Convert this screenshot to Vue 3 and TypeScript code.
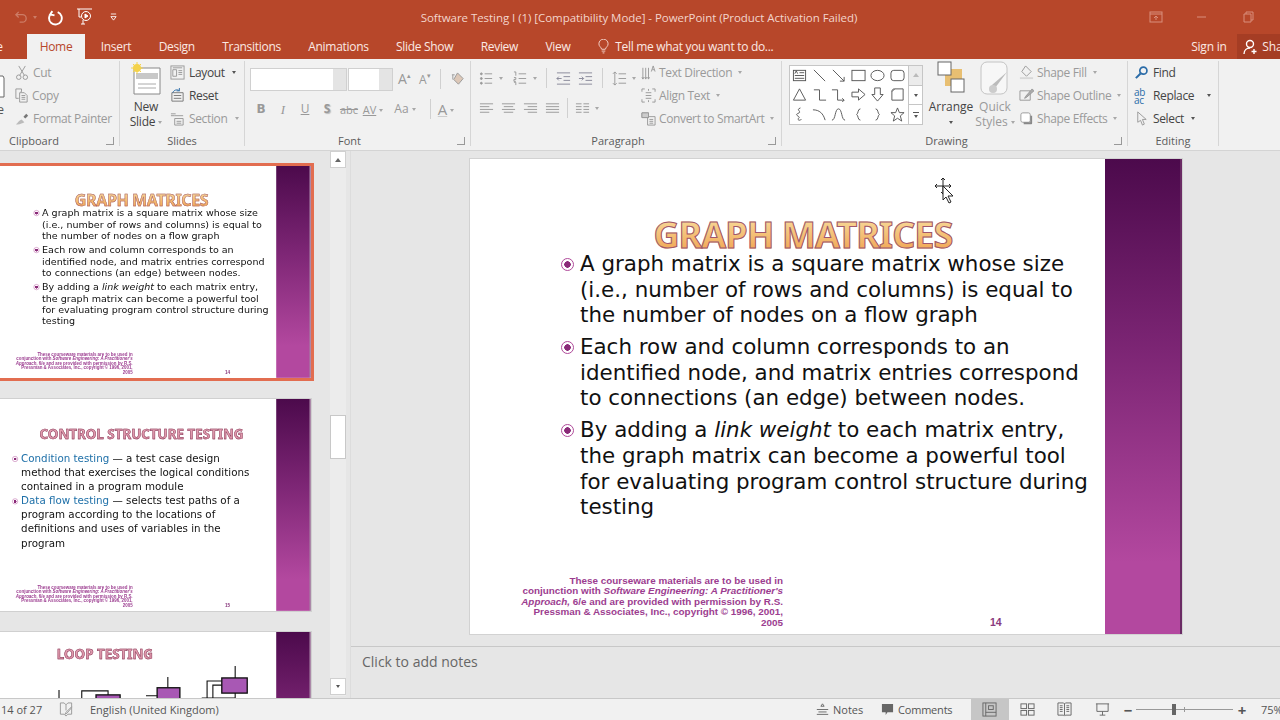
<script setup lang="ts">
type Seg = { t: string; k?: "i" | "b" };
type Bullet = Seg[][];

const s = (t: string, k?: "i" | "b"): Seg => ({ t, k });

const graphBullets: Bullet[] = [
  [
    [s("A graph matrix is a square matrix whose size")],
    [s("(i.e., number of rows and columns) is equal to")],
    [s("the number of nodes on a flow graph")],
  ],
  [
    [s("Each row and column corresponds to an")],
    [s("identified node, and matrix entries correspond")],
    [s("to connections (an edge) between nodes.")],
  ],
  [
    [s("By adding a "), s("link weight", "i"), s(" to each matrix entry,")],
    [s("the graph matrix can become a powerful tool")],
    [s("for evaluating program control structure during")],
    [s("testing")],
  ],
];

const controlBullets: Bullet[] = [
  [
    [s("Condition testing", "b"), s(" — a test case design")],
    [s("method that exercises the logical conditions")],
    [s("contained in a program module")],
  ],
  [
    [s("Data flow testing", "b"), s(" — selects test paths of a")],
    [s("program according to the locations of")],
    [s("definitions and uses of variables in the")],
    [s("program")],
  ],
];

const thumbs = [
  { id: "graph", title: "GRAPH MATRICES", bullets: graphBullets, num: "14", active: true },
  { id: "control", title: "CONTROL STRUCTURE TESTING", bullets: controlBullets, num: "15", active: false },
];

const tabs = ["Insert", "Design", "Transitions", "Animations", "Slide Show", "Review", "View"];

// 16x16 outline icons, stroke colour comes from the svg's class
const icons: Record<string, string> = {
  cut: '<circle cx="4" cy="13" r="2.4"/><circle cx="11" cy="13" r="2.4"/><path d="M5 11 11 1M10 11 4 1"/>',
  copy: '<path d="M2 1h6v3h-1M2 1v10h3M6 5h5l3 3v7H6zM8 8h4M8 10h4M8 12h4"/>',
  painter: '<path d="M1 14c2-1 3-4 6-5l3 3c-2 1-6 3-9 2z" fill="#bbb" stroke="none"/><path d="M9 6l3-3 2 2-3 3z" fill="#777" stroke="none"/>',
  layout: '<rect x="1" y="1" width="14" height="14"/><path d="M3 3h10M3 5h4v7H3zM9 6h4M9 8h4M9 10h4"/>',
  reset: '<path d="M2 5h12v9H2zM4 8h8M4 11h8" stroke="#777"/><path d="M3 5c1-3 5-4 7-2M10 0v3H7" stroke="#2b6ca8"/>',
  section: '<path d="M1 3h5M1 5h4M5 8h9v7H5zM5 5h9M7 11h5M7 13h5"/>',
  clear: '<path d="M8 1 14 7 9 13 4 8z" fill="#ddc8b8"/><path d="M2 3h3M3 3v5"/>',
  bullets: '<path d="M6 3h8M6 8h8M6 13h8" /><circle cx="2.5" cy="3" r="1" fill="#999"/><circle cx="2.5" cy="8" r="1" fill="#999"/><circle cx="2.5" cy="13" r="1" fill="#999"/>',
  numbers: '<path d="M6 3h8M6 8h8M6 13h8M1 1h2v4M1 7h2v2H1v2h2M1 12h2v3"/>',
  outdent: '<path d="M1 2h14M8 6h7M8 10h7M1 14h14M6 8H1M3 6 1 8l2 2" stroke="#889"/>',
  indent: '<path d="M1 2h14M8 6h7M8 10h7M1 14h14M1 8h5M4 6l2 2-2 2" stroke="#889"/>',
  spacing: '<path d="M7 3h8M7 8h8M7 13h8M3 1v14M1 3l2-2 2 2M1 13l2 2 2-2"/>',
  left: '<path d="M1 3h14M1 6h10M1 9h14M1 12h10"/>',
  center: '<path d="M1 3h14M3 6h10M1 9h14M3 12h10"/>',
  right: '<path d="M1 3h14M5 6h10M1 9h14M5 12h10"/>',
  justify: '<path d="M1 3h14M1 6h14M1 9h14M1 12h14"/>',
  columns: '<path d="M1 3h6M9 3h6M1 6h6M9 6h6M1 9h6M9 9h6M1 12h6M9 12h6"/>',
  textdir: '<path d="M2 3v12M5 3v12M8 3v12M1 13l1 2 1-2M4 13l1 2 1-2M7 13l1 2 1-2M11 7l2-6 2 6M12 5h2"/>',
  aligntext: '<path d="M1 1h3M1 1v3M15 1h-3M15 1v3M1 15h3M1 15v-3M15 15h-3M15 15v-3M5 5h6M5 8h6M5 11h6M8 1v2M8 13v2"/>',
  smartart: '<path d="M1 2h7v5H1zM7 6h8v9H7zM9 9h4M9 11h4M9 13h4" /><path d="M1 2h7v5H1z" fill="#ccc"/>',
  fill: '<path d="M7 1 13 7 8 12 3 7z"/><path d="M1 14h14" stroke="#d8d8d8" stroke-width="2"/>',
  outline: '<path d="M1 3h11v10H1z"/><path d="M14 1 7 9l-1 2 2-1 8-7z" fill="#aaa"/>',
  effects: '<rect x="2" y="2" width="10" height="10" rx="2" fill="#fff"/><path d="M12 5h2v8a1 1 0 0 1-1 1H5v-2h7z" fill="#888" stroke="none"/>',
  find: '<circle cx="10" cy="6" r="3.8" stroke="#2b6ca8" stroke-width="1.8"/><path d="M7 9 2 14" stroke="#2b6ca8" stroke-width="2.2"/>',
  select: '<path d="M4 1v11l3-2 2 5 2-1-2-5h4z"/>',
  notes: '<path d="M1 8h14M3 11h10M1 14h14M6 4l2-3 2 3z" stroke="#555"/>',
  sorter: '<rect x="1" y="2" width="6" height="5"/><rect x="9" y="2" width="6" height="5"/><rect x="1" y="9" width="6" height="5"/><rect x="9" y="9" width="6" height="5"/>',
  reading: '<path d="M1 1h6l1 1 1-1h6v13H9l-1 1-1-1H1zM8 2v12M3 4h3M3 6h3M3 8h3M3 10h3M10 4h3M10 6h3M10 8h3M10 10h3"/>',
  show: '<path d="M1 2h14M2 2v8h12V2M8 10v4M5 14h6"/>',
  normal: '<rect x="1" y="1" width="14" height="14"/><path d="M4 1v14M4 11h11"/><rect x="7" y="4" width="5" height="4"/>',
  specs: '<path d="M2 1h4l2 2 2-2h4v12h-4l-2 2-2-2H2zM8 3v6M14 6l-5 6-2 1 1-2 6-6" />',
};

const shapes = [
  '<rect x="1.5" y="2.5" width="13" height="11"/><path d="M3 6l1.500-3 1.500 3M8 5h5M3 8h10M3 11h10"/>',
  '<path d="M2 2l12 12"/>',
  '<path d="M2 2l12 12M14 9.500V14H9.500"/>',
  '<rect x="1" y="2.500" width="14" height="11"/>',
  '<ellipse cx="8" cy="8" rx="7" ry="5.500"/>',
  '<rect x="1" y="2.500" width="14" height="11" rx="3"/>',
  '<path d="M8 2 14.500 14h-13z"/>',
  '<path d="M2 3h6v11h7"/>',
  '<path d="M1 3h6v11h7M12 12l2 2-2 2"/>',
  '<path d="M1 5.500h7V2l7 6-7 6V10.500H1z"/>',
  '<path d="M5 1h6v7h3l-6 7-6-7h3z"/>',
  '<path d="M5 2h9v12H2V5zM5 2C3 2 2 3 2 5"/>',
  '<path d="M9 1C3 3 12 5 6 7c-4 2 4 3 1 5-2 2 2 3 3 1"/>',
  '<path d="M1 3c7 0 11 4 13 11"/>',
  '<path d="M1 14C5 14 4 2 8 2s3 12 7 12"/>',
  '<path d="M10 2C7 2 8 7 6 8c2 1 1 6 4 6"/>',
  '<path d="M6 2c3 0 2 5 4 6-2 1-1 6-4 6"/>',
  '<path d="M8 1l2 5h5l-4 3.500 1.500 5.500L8 12l-4.500 3L5 9.500 1 6h5z"/>',
];
</script>

<template>
  <div class="app">
    <header class="titlebar">
      <div class="qat">
        <svg class="undo" viewBox="0 0 16 16"><path d="M5 2 2 5l3 3M2 5h7a4 4 0 0 1 0 8H6" /></svg>
        <i class="caret faded"></i>
        <svg class="redo" viewBox="0 0 16 16"><path d="M6 2 4 5l4 1M5 4a6 6 0 1 0 6-1" /></svg>
        <svg class="start" viewBox="0 0 18 18">
          <path d="M1 1h15M3 1v8h2M9 16H5M7 12v4" /><circle cx="10" cy="8" r="4.500" /><path d="M9 6v4l3-2z" fill="#fff" />
        </svg>
        <svg class="more" viewBox="0 0 8 10"><path d="M1 1h6M1 4h6L4 8z" /></svg>
      </div>
      <div class="doc-title">Software Testing I (1) [Compatibility Mode] - PowerPoint (Product Activation Failed)</div>
      <div class="winctl">
        <svg viewBox="0 0 14 12"><rect x="1" y="1" width="12" height="10" /><path d="M1 3h12M7 9V5M5 7l2-2 2 2" /></svg>
        <svg viewBox="0 0 14 12"><path d="M2 6h9" /></svg>
        <svg viewBox="0 0 14 12"><path d="M3 3h7v8H3zM5 3V1h7v8h-2" /></svg>
      </div>
    </header>

    <nav class="tabbar">
      <span class="tab-file">File</span>
      <span class="tab tab-home">Home</span>
      <span v-for="t in tabs" :key="t" class="tab">{{ t }}</span>
      <span class="tell">
        <svg viewBox="0 0 12 16"><path d="M4 11C3 8 1 8 1 5a5 5 0 0 1 10 0c0 3-2 3-3 6zM4 13h4M5 15h2" /></svg>
        Tell me what you want to do...
      </span>
      <span class="signin">Sign in</span>
      <span class="share">
        <svg viewBox="0 0 16 16"><circle cx="7" cy="5" r="3.500" /><path d="M1 15c0-4 3-6 6-6M11 10v5M8.500 12.500h5" /></svg>
        Share
      </span>
    </nav>

    <section class="ribbon">
      <div class="group g-clip">
        <div class="body">
          <div class="paste-sliver">
            <svg viewBox="0 0 5 24"><path d="M-4 1h7l1 2v19h-8" fill="#fff" stroke="#666" /></svg>
            <span class="paste-label"><span>Paste</span></span>
          </div>
          <div class="rows">
            <div class="rb"><svg class="ic" viewBox="0 0 16 16" v-html="icons.cut"></svg>Cut</div>
            <div class="rb"><svg class="ic" viewBox="0 0 16 16" v-html="icons.copy"></svg>Copy</div>
            <div class="rb"><svg class="ic" viewBox="0 0 16 16" v-html="icons.painter"></svg>Format Painter</div>
          </div>
        </div>
        <div class="label">Clipboard<i class="launch"></i></div>
      </div>

      <div class="group g-slides">
        <div class="body">
          <div class="big new-slide">
            <svg class="bigic" viewBox="0 0 30 32">
              <path d="M3 6h26v26H3z" fill="#fff" stroke="#888" />
              <path d="M5 11h22v6H5z" fill="#c8c8c8" />
              <path d="M7 22h18M7 26h18" stroke="#aaa" />
              <circle cx="6" cy="6" r="4" fill="#f4d24a" />
              <path d="M6 0v12M0 6h12M2 2l8 8M10 2l-8 8" stroke="#f4d24a" />
            </svg>
            <span>New</span>
            <span>Slide<i class="caret"></i></span>
          </div>
          <div class="rows">
            <div class="rb on"><svg class="ic" viewBox="0 0 16 16" v-html="icons.layout"></svg>Layout<i class="caret"></i></div>
            <div class="rb on"><svg class="ic" viewBox="0 0 16 16" v-html="icons.reset"></svg>Reset</div>
            <div class="rb"><svg class="ic" viewBox="0 0 16 16" v-html="icons.section"></svg>Section<i class="caret"></i></div>
          </div>
        </div>
        <div class="label">Slides</div>
      </div>

      <div class="group g-font">
        <div class="body col">
          <div class="font-row top">
            <span class="combo c-name"><b></b></span>
            <span class="combo c-size"><b></b></span>
            <span class="glyph grow-a">A<sup>▴</sup></span>
            <span class="glyph shrink-a">A<sup>▾</sup></span>
            <i class="sep"></i>
            <svg class="ic" viewBox="0 0 16 16" v-html="icons.clear"></svg>
          </div>
          <div class="font-row bottom">
            <span class="glyph fmt strong">B</span>
            <span class="glyph fmt ital">I</span>
            <span class="glyph fmt under">U</span>
            <span class="glyph fmt shadow">S</span>
            <span class="glyph fmt strike">abc</span>
            <span class="glyph fmt av">AV<i class="caret"></i></span>
            <span class="glyph fmt aa">Aa<i class="caret"></i></span>
            <i class="sep"></i>
            <span class="glyph fmt color">A<i class="caret"></i></span>
          </div>
        </div>
        <div class="label pad">Font<i class="launch"></i></div>
      </div>

      <div class="group g-para">
        <div class="body">
          <div class="col para-left">
            <div class="para-row top">
              <svg class="ic" viewBox="0 0 16 16" v-html="icons.bullets"></svg><i class="caret"></i>
              <svg class="ic num-ic" viewBox="0 0 16 16" v-html="icons.numbers"></svg><i class="caret"></i>
              <i class="sep"></i>
              <svg class="ic" viewBox="0 0 16 16" v-html="icons.outdent"></svg>
              <svg class="ic" viewBox="0 0 16 16" v-html="icons.indent"></svg>
              <i class="sep"></i>
              <svg class="ic" viewBox="0 0 16 16" v-html="icons.spacing"></svg><i class="caret"></i>
            </div>
            <div class="para-row bottom">
              <svg class="ic" viewBox="0 0 16 16" v-html="icons.left"></svg>
              <svg class="ic" viewBox="0 0 16 16" v-html="icons.center"></svg>
              <svg class="ic" viewBox="0 0 16 16" v-html="icons.right"></svg>
              <svg class="ic" viewBox="0 0 16 16" v-html="icons.justify"></svg>
              <i class="sep"></i>
              <svg class="ic" viewBox="0 0 16 16" v-html="icons.columns"></svg><i class="caret"></i>
            </div>
          </div>
          <div class="rows">
            <div class="rb"><svg class="ic" viewBox="0 0 16 16" v-html="icons.textdir"></svg>Text Direction<i class="caret"></i></div>
            <div class="rb"><svg class="ic" viewBox="0 0 16 16" v-html="icons.aligntext"></svg>Align Text<i class="caret"></i></div>
            <div class="rb"><svg class="ic" viewBox="0 0 16 16" v-html="icons.smartart"></svg>Convert to SmartArt<i class="caret"></i></div>
          </div>
        </div>
        <div class="label pad">Paragraph<i class="launch"></i></div>
      </div>

      <div class="group g-draw">
        <div class="body">
          <div class="gallery">
            <div class="shapes">
              <svg v-for="(p, i) in shapes" :key="i" class="shape" viewBox="0 0 16 16" v-html="p"></svg>
            </div>
            <div class="gal-scroll">
              <span class="dim"><i class="up"></i></span>
              <span><i class="caret dark"></i></span>
              <span><i class="bar"></i><i class="caret dark"></i></span>
            </div>
          </div>
          <div class="big arrange">
            <svg class="bigic" viewBox="0 0 28 34">
              <rect x="8" y="8" width="17" height="17" fill="#e8bf72" />
              <rect x="1" y="1" width="13" height="13" fill="#fff" stroke="#666" />
              <rect x="14" y="18" width="13" height="13" fill="#fff" stroke="#666" />
            </svg>
            <span class="on-text">Arrange</span>
            <span class="on-text"><i class="caret"></i></span>
          </div>
          <div class="big quick">
            <svg class="bigic" viewBox="0 0 30 34">
              <rect x="1" y="1" width="26" height="32" rx="6" fill="#f7f7f7" stroke="#c4c4c4" />
              <path d="M27 11 15 27l-4 1 1-4z" fill="#bbb" />
              <circle cx="13" cy="28" r="4" fill="#ccc" />
            </svg>
            <span>Quick</span>
            <span>Styles<i class="caret"></i></span>
          </div>
          <div class="rows">
            <div class="rb"><svg class="ic" viewBox="0 0 16 16" v-html="icons.fill"></svg>Shape Fill<i class="caret"></i></div>
            <div class="rb"><svg class="ic" viewBox="0 0 16 16" v-html="icons.outline"></svg>Shape Outline<i class="caret"></i></div>
            <div class="rb"><svg class="ic" viewBox="0 0 16 16" v-html="icons.effects"></svg>Shape Effects<i class="caret"></i></div>
          </div>
        </div>
        <div class="label pad">Drawing<i class="launch"></i></div>
      </div>

      <div class="group g-edit">
        <div class="body">
          <div class="rows">
            <div class="rb on"><svg class="ic" viewBox="0 0 16 16" v-html="icons.find"></svg>Find</div>
            <div class="rb on"><span class="repl">ab<br />ac</span>Replace<i class="caret gap"></i></div>
            <div class="rb on"><svg class="ic" viewBox="0 0 16 16" v-html="icons.select"></svg>Select<i class="caret"></i></div>
          </div>
        </div>
        <div class="label">Editing</div>
      </div>
    </section>

    <main class="workspace">
      <aside class="rail">
        <div class="thumbs">
          <div v-for="t in thumbs" :key="t.id" class="thumb" :class="{ active: t.active }">
            <div class="slide scaled" :class="'s-' + t.id">
              <div class="slide-main">
                <h2 class="slide-title">{{ t.title }}</h2>
                <div class="slide-body">
                  <div v-for="(b, i) in t.bullets" :key="i" class="bullet">
                    <span class="dot"></span>
                    <div>
                      <div v-for="(line, j) in b" :key="j" class="line">
                        <span v-for="(seg, n) in line" :key="n" :class="seg.k">{{ seg.t }}</span>
                      </div>
                    </div>
                  </div>
                </div>
                <div class="slide-foot">
                  <p class="credit">
                    These courseware materials are to be used in<br />conjunction with
                    <em>Software Engineering: A Practitioner's</em><br /><em>Approach,</em> 6/e and are provided with
                    permission by R.S.<br />Pressman &amp; Associates, Inc., copyright © 1996, 2001,<br />2005
                  </p>
                  <span class="num">{{ t.num }}</span>
                </div>
              </div>
              <div class="band"></div>
            </div>
          </div>
          <div class="thumb">
            <div class="slide scaled s-loop">
              <div class="slide-main">
                <h2 class="slide-title">LOOP TESTING</h2>
                <svg class="loops" viewBox="0 0 635 300">
                  <g fill="#a858b4" stroke="#111" stroke-width="3">
                    <rect x="231" y="72" width="54" height="60" />
                    <rect x="368" y="56" width="51" height="60" />
                    <rect x="513" y="34" width="57" height="34" />
                  </g>
                  <g fill="none" stroke="#111" stroke-width="2.500">
                    <path d="M148 61v40M199 100V63h59v9M392 32v24M543 7v27M343 74h25M480 100V41h33M493 100V50h20M468 79h75V68" />
                  </g>
                </svg>
              </div>
              <div class="band"></div>
            </div>
          </div>
        </div>
        <div class="rail-scroll">
          <span class="sb-btn"><i class="up"></i></span>
          <span class="sb-track"><i class="sb-thumb"></i></span>
          <span class="sb-btn"><i class="caret dark"></i></span>
        </div>
      </aside>

      <div class="editor">
        <div class="stage">
          <div class="slide s-graph">
            <div class="slide-main">
              <h2 class="slide-title">GRAPH MATRICES</h2>
              <div class="slide-body">
                <div v-for="(b, i) in graphBullets" :key="i" class="bullet">
                  <span class="dot"></span>
                  <div>
                    <div v-for="(line, j) in b" :key="j" class="line">
                      <span v-for="(seg, n) in line" :key="n" :class="seg.k">{{ seg.t }}</span>
                    </div>
                  </div>
                </div>
              </div>
              <div class="slide-foot">
                <p class="credit">
                  These courseware materials are to be used in<br />conjunction with
                  <em>Software Engineering: A Practitioner's</em><br /><em>Approach,</em> 6/e and are provided with
                  permission by R.S.<br />Pressman &amp; Associates, Inc., copyright © 1996, 2001,<br />2005
                </p>
                <span class="num">14</span>
              </div>
            </div>
            <div class="band"></div>
            <svg class="cursor" viewBox="0 0 20 28">
              <path d="M9 1v16M1 9h16M7 3l2-2 2 2M7 15l2 2 2-2M3 7 1 9l2 2M15 7l2 2-2 2" fill="none" stroke="#222" />
              <path d="M9 9v14l3-3 3 6 2-1-3-6h5z" fill="#fff" stroke="#222" />
            </svg>
          </div>
        </div>
        <div class="notes">Click to add notes</div>
      </div>
    </main>

    <footer class="status">
      <span class="count">14 of 27</span>
      <svg class="ic st-spec" viewBox="0 0 16 16" v-html="icons.specs"></svg>
      <span class="lang">English (United Kingdom)</span>
      <span class="st-btn st-notes"><svg class="ic" viewBox="0 0 16 16" v-html="icons.notes"></svg>Notes</span>
      <span class="st-btn st-comments">
        <svg class="ic" viewBox="0 0 14 14"><path d="M1 1h12v9H7l-2 3v-3H1z" fill="#666" stroke="none" /></svg>
        Comments
      </span>
      <span class="view active"><svg class="ic" viewBox="0 0 16 16" v-html="icons.normal"></svg></span>
      <span class="view"><svg class="ic" viewBox="0 0 16 16" v-html="icons.sorter"></svg></span>
      <span class="view"><svg class="ic" viewBox="0 0 16 16" v-html="icons.reading"></svg></span>
      <span class="view"><svg class="ic" viewBox="0 0 16 16" v-html="icons.show"></svg></span>
      <span class="zoom-sign">−</span>
      <span class="slider"><i class="tick"></i><i class="knob"></i></span>
      <span class="zoom-sign">+</span>
      <span class="pct">75%</span>
    </footer>
  </div>
</template>

<style scoped>
.app {
  width: 1280px;
  height: 720px;
  overflow: hidden;
  display: flex;
  flex-direction: column;
  background: #e6e6e6;
  font-family: "Open Sans", "Noto Sans", sans-serif;
  font-size: 12px;
  color: #444;
}

svg {
  flex: none;
  display: block;
  fill: none;
}

/* title bar */
.titlebar {
  height: 34px;
  flex: none;
  display: flex;
  align-items: center;
  background: #b7472a;
  color: #f3d5cc;
  position: relative;
}

.qat {
  width: 400px;
  box-sizing: border-box;
  flex: none;
  display: flex;
  align-items: center;
  padding-left: 14px;
}

.qat svg {
  stroke: #fff;
  stroke-width: 1.4;
}

.qat .undo {
  width: 15px;
  height: 15px;
  stroke: #cd7c66;
}

.caret.faded {
  margin-left: 4px;
  border-top-color: #cd7c66;
}

.qat .redo {
  width: 17px;
  height: 17px;
  margin-left: 9px;
  stroke-width: 1.800;
}

.qat .start {
  width: 18px;
  height: 18px;
  margin-left: 13px;
  stroke-width: 1;
}

.qat .more {
  width: 7px;
  height: 9px;
  margin-left: 16px;
  stroke-width: 1;
}

.doc-title {
  width: 478px;
  flex: none;
  text-align: center;
  font-size: 11.500px;
  letter-spacing: -0.05px;
  white-space: nowrap;
}

.winctl {
  display: flex;
  gap: 32px;
  margin-left: 271px;
}

.winctl svg {
  width: 14px;
  height: 12px;
  stroke: #d98f7c;
}

/* tabs */
.tabbar {
  height: 25px;
  flex: none;
  display: flex;
  align-items: stretch;
  background: #b7472a;
  color: #fbe9e4;
  white-space: nowrap;
}

.tabbar > span {
  display: flex;
  align-items: center;
}

.tab-file {
  width: 27px;
  box-sizing: border-box;
  justify-content: flex-end;
  padding-right: 24px;
  overflow: hidden;
}

.tab {
  padding: 0 13.700px;
  letter-spacing: -0.3px;
}

.tab-home {
  width: 58px;
  padding: 0;
  justify-content: center;
  background: #f1f1f1;
  color: #b7472a;
  margin-right: 2px;
}

.tell {
  gap: 6px;
  margin-left: 14px;
  width: 593px;
  letter-spacing: -0.3px;
}

.tell svg {
  width: 11px;
  height: 15px;
  stroke: #f6d9d1;
}

.signin {
  width: 46px;
  letter-spacing: -0.2px;
}

.share {
  flex: 1;
  gap: 3px;
  padding-left: 6px;
  background: #a53d24;
  overflow: hidden;
}

.share svg {
  width: 16px;
  height: 16px;
  stroke: #fff;
  stroke-width: 1.400;
}

/* ribbon */
.ribbon {
  height: 92px;
  box-sizing: border-box;
  flex: none;
  display: flex;
  background: #f1f1f1;
  border-bottom: 1px solid #d4d4d4;
  color: #9a9a9a;
  white-space: nowrap;
}

.group {
  flex: none;
  box-sizing: border-box;
  display: flex;
  flex-direction: column;
  border-right: 1px solid #d6d6d6;
  margin: 2px 0 4px;
}

.g-clip { width: 120px; }
.g-slides { width: 125px; }
.g-font { width: 226px; }
.g-para { width: 311px; }
.g-draw { width: 346px; }
.g-edit { width: 91px; }

.body {
  height: 69px;
  flex: none;
  display: flex;
}

.body.col,
.col {
  flex-direction: column;
  display: flex;
}

.label {
  flex: none;
  position: relative;
  margin-top: 3px;
  text-align: center;
  font-size: 11px;
  line-height: 15px;
  color: #5c5c5c;
}

.label.pad {
  padding-right: 16px;
}

.g-clip .label {
  text-align: left;
  padding-left: 9px;
}

.launch {
  position: absolute;
  right: 5px;
  top: 4px;
  width: 7px;
  height: 7px;
  border-right: 1px solid #999;
  border-bottom: 1px solid #999;
}

.rows {
  display: flex;
  flex-direction: column;
}

.rb {
  height: 23px;
  display: flex;
  align-items: center;
  gap: 3px;
  letter-spacing: -0.35px;
}

.rb.on,
.on-text {
  color: #444;
}

.ic {
  width: 15px;
  height: 15px;
  stroke: #999;
  stroke-width: 1;
}

.caret {
  display: inline-block;
  width: 0;
  height: 0;
  margin-left: 3px;
  vertical-align: middle;
  border: 2.500px solid transparent;
  border-top: 3px solid #a8a8a8;
  border-bottom: 0;
}

.rb.on .caret,
.on-text .caret,
.caret.dark {
  border-top-color: #555;
}

.caret.gap {
  margin-left: 9px;
}

.up {
  display: inline-block;
  border: 3px solid transparent;
  border-bottom: 4px solid #666;
  border-top: 0;
}

.sep {
  width: 1px;
  height: 20px;
  background: #d0d0d0;
  flex: none;
}

.big {
  display: flex;
  flex-direction: column;
  align-items: center;
  line-height: 15px;
}

.bigic {
  width: 30px;
  height: 34px;
  margin-bottom: 4px;
}

.paste-sliver {
  width: 15px;
  flex: none;
  font-size: 12px;
  color: #555;
}

.paste-sliver svg {
  width: 5px;
  height: 24px;
  margin-top: 14px;
}

.paste-label {
  display: flex;
  justify-content: flex-end;
  width: 4px;
  overflow: hidden;
  margin-top: 2px;
}

.g-clip .rb:nth-child(2) {
  margin-left: -1px;
}

.new-slide {
  width: 48px;
  color: #444;
  padding-left: 2px;
  letter-spacing: -0.2px;
}

.g-slides .rb {
  gap: 4px;
}

/* font group */
.g-font .body {
  padding: 7px 0 0 5px;
  gap: 8px;
  box-sizing: border-box;
}

.font-row {
  display: flex;
  align-items: center;
  height: 22px;
}

.combo {
  display: flex;
  justify-content: flex-end;
  height: 21px;
  background: #fff;
  border: 1px solid #d0d0d0;
}

.combo b {
  width: 13px;
  background: #e4e4e4;
}

.c-name { width: 95px; }
.c-size { width: 43px; margin-left: 1px; }

.glyph {
  display: inline-block;
  color: #999;
  line-height: 1;
}

.glyph sup {
  font-size: 7px;
  vertical-align: 6px;
}

.grow-a {
  font-size: 14px;
  margin-left: 5px;
  width: 21px;
}

.shrink-a {
  font-size: 12px;
  margin-right: 4px;
  width: 17px;
}

.font-row .sep {
  margin-right: 9px;
}

.fmt {
  font-size: 12px;
  text-align: center;
  width: 22px;
  white-space: nowrap;
}

.font-row.bottom .strong { font-weight: 700; font-family: "DejaVu Sans", sans-serif; }
.ital { font-style: italic; font-family: "Liberation Serif", serif; font-size: 13px; }
.under { text-decoration: underline; }
.shadow { font-weight: 700; text-shadow: 1px 1px 1px #bbb; }
.strike { text-decoration: line-through; font-size: 11px; }
.av { width: 26px; text-decoration: underline; font-size: 11px; }
.aa { width: 32px; margin-left: 3px; }
.font-row.bottom .sep { margin: 0 3px 0 9px; }
.color { font-size: 15px; width: 24px; text-decoration: underline; text-decoration-color: #ccc; }

/* paragraph group */
.para-left {
  width: 170px;
  box-sizing: border-box;
  flex: none;
  padding: 7px 0 0 8px;
  gap: 10px;
}

.para-row {
  display: flex;
  align-items: center;
  height: 20px;
  gap: 7px;
}

.para-row .caret {
  margin-left: -2px;
}

.num-ic {
  margin-left: 3px;
}

.para-row.top .sep {
  margin: 0 2px;
}

/* drawing group */
.gallery {
  width: 134px;
  height: 60px;
  box-sizing: border-box;
  flex: none;
  display: flex;
  margin: 4px 6px 0 7px;
  background: #fff;
  border: 1px solid #c6c6c6;
}

.shapes {
  flex: 1;
  display: grid;
  grid-template-columns: repeat(6, 19.500px);
  grid-auto-rows: 19.300px;
  align-items: center;
  justify-items: center;
}

.shape {
  width: 15px;
  height: 15px;
  stroke: #555;
  stroke-width: 1;
}

.gal-scroll {
  width: 13px;
  display: flex;
  flex-direction: column;
  border-left: 1px solid #c6c6c6;
}

.gal-scroll span {
  flex: 1;
  display: flex;
  flex-direction: column;
  gap: 2px;
  align-items: center;
  justify-content: center;
}

.gal-scroll span + span {
  border-top: 1px solid #c6c6c6;
}

.gal-scroll .dim {
  background: #ececec;
}

.gal-scroll .dim .up {
  border-bottom-color: #bbb;
}

.gal-scroll .caret {
  margin: 0;
}

.gal-scroll .bar {
  width: 6px;
  height: 1px;
  background: #555;
}

.arrange {
  width: 44px;
  flex: none;
}

.arrange .caret {
  margin: 0;
}

.quick {
  width: 44px;
  flex: none;
  margin-right: 2px;
}

.g-edit .rows {
  padding-left: 6px;
}

.g-edit .rb {
  gap: 4px;
}

.repl {
  display: block;
  width: 15px;
  font-size: 10px;
  line-height: 8px;
  color: #2b6ca8;
}

/* workspace */
.workspace {
  flex: 1;
  min-height: 0;
  display: flex;
}

.rail {
  width: 350px;
  flex: none;
  display: flex;
  border-right: 1px solid #dcdcdc;
  overflow: hidden;
}

.thumbs {
  width: 330px;
  flex: none;
  overflow: hidden;
  padding-top: 15px;
  display: flex;
  flex-direction: column;
  gap: 21px;
}

.thumb {
  width: 318px;
  height: 212px;
  flex: none;
  margin-left: -7px;
  outline: 1px solid #d0d0d0;
  background: #fff;
}

.thumb.active {
  outline: 3px solid #e26d50;
}

.rail-scroll {
  width: 16px;
  flex: none;
  display: flex;
  flex-direction: column;
  background: #ececec;
  height: 546px;
  margin-top: -1px;
}

.sb-btn {
  height: 15px;
  flex: none;
  margin: 1px 0;
  background: #fff;
  border: 1px solid #d0d0d0;
  display: flex;
  align-items: center;
  justify-content: center;
}

.sb-btn .caret {
  margin: 0;
}

.sb-track {
  flex: 1;
  padding-top: 246px;
}

.sb-thumb {
  display: block;
  height: 42px;
  background: #fff;
  border: 1px solid #c8c8c8;
}

/* slides, drawn at full size and scaled down in the rail */
.slide {
  width: 712px;
  height: 475px;
  flex: none;
  display: flex;
  background: #fff;
  position: relative;
  color: #111;
  font-family: "DejaVu Sans", sans-serif;
}

.scaled {
  transform: scale(0.446);
  transform-origin: 0 0;
  filter: blur(0.6px);
}

.slide-main {
  flex: 1;
  min-width: 0;
  display: flex;
  flex-direction: column;
  padding: 57px 0 6px 0;
  overflow: hidden;
}

.slide-title {
  margin: 0;
  padding-left: 31px;
  height: 38px;
  flex: none;
  line-height: 38px;
  text-align: center;
  font-family: "Noto Sans", sans-serif;
  font-size: 36px;
  font-weight: 700;
  letter-spacing: -0.9px;
  white-space: nowrap;
  color: transparent;
  background: linear-gradient(#f8dd9e, #f0a24e);
  -webkit-background-clip: text;
  background-clip: text;
  -webkit-text-stroke: 1px #a0566e;
}

.slide-body {
  margin-top: -3px;
  padding: 0 0 0 91px;
  flex: 1;
}

.bullet {
  position: relative;
  padding-left: 19px;
  margin-bottom: 6px;
}

.dot {
  position: absolute;
  left: 0;
  top: 7px;
  width: 13px;
  height: 13px;
  box-sizing: border-box;
  border-radius: 50%;
  border: 1.500px solid #b04a9a;
  background: radial-gradient(circle, #8a2a78 0 3px, #fff 3.500px);
}

.line {
  height: 25.700px;
  line-height: 25.700px;
  font-size: 21.400px;
  white-space: nowrap;
}

.line .i {
  font-style: italic;
}

.line .b {
  color: #1d6fa8;
}

.slide-foot {
  display: flex;
  align-items: flex-end;
}

.credit {
  width: 313px;
  flex: none;
  margin: 0;
  text-align: right;
  white-space: nowrap;
  font-family: "Liberation Sans", sans-serif;
  font-size: 9.900px;
  font-weight: 700;
  line-height: 10.500px;
  color: #9c3d90;
}

.num {
  margin-left: 207px;
  font-family: "Liberation Sans", sans-serif;
  font-size: 10.500px;
  font-weight: 700;
  line-height: 12px;
  color: #8a3a7e;
}

.band {
  width: 77px;
  flex: none;
  background: linear-gradient(#4c0a4c, #7c2574 40%, #b3489f 85%, #b3489f);
  border-right: 2px solid #6a2b64;
  box-sizing: border-box;
}

.s-control .slide-title,
.s-loop .slide-title {
  padding: 0;
  font-size: 30px;
  letter-spacing: 0;
  background: linear-gradient(#e8a8b8, #d98aa0);
  -webkit-background-clip: text;
  background-clip: text;
  -webkit-text-stroke: 1px #7c3050;
}

.s-control .slide-title {
  width: 666px;
}

.s-control .slide-main {
  padding-top: 60px;
}

.s-control .slide-body {
  margin-top: 0;
  padding: 20px 0 0 43px;
}

.s-control .line {
  height: 31.600px;
  line-height: 31.600px;
  font-size: 23.100px;
}

.s-control .bullet {
  margin-bottom: 0;
  padding-left: 20px;
}

.s-control .dot {
  top: 10px;
}

.s-loop .slide-title {
  width: 502px;
}

.s-loop .slide-main {
  padding-top: 31px;
}

.loops {
  width: 635px;
  height: 300px;
}

.cursor {
  position: absolute;
  left: 464px;
  top: 18px;
  width: 20px;
  height: 28px;
}

/* editor */
.editor {
  flex: 1;
  display: flex;
  flex-direction: column;
  min-width: 0;
}

.stage {
  flex: 1;
  padding: 8px 0 0 119px;
  min-height: 0;
}

.stage .slide {
  outline: 1px solid #d2d2d2;
}

.notes {
  height: 52px;
  flex: none;
  box-sizing: border-box;
  border-top: 1px solid #c8c8c8;
  padding: 5px 0 0 11px;
  font-size: 14px;
  color: #666;
}

/* status bar */
.status {
  height: 22px;
  flex: none;
  box-sizing: border-box;
  display: flex;
  align-items: center;
  background: #f1f1f1;
  border-top: 1px solid #c8c8c8;
  font-size: 11px;
  color: #555;
  white-space: nowrap;
  overflow: hidden;
}

.count {
  width: 58px;
  padding-left: 1px;
  box-sizing: border-box;
  flex: none;
}

.st-spec {
  width: 16px;
  height: 15px;
}

.lang {
  margin-left: 16px;
  width: 130px;
  flex: none;
}

.st-btn {
  display: flex;
  align-items: center;
  gap: 4px;
}

.st-btn .ic {
  width: 13px;
  height: 13px;
  stroke: #666;
}

.st-notes {
  margin-left: 596px;
  width: 61px;
  flex: none;
}

.st-comments {
  width: 94px;
  flex: none;
  padding-left: 4px;
  box-sizing: border-box;
  letter-spacing: -0.2px;
}

.view {
  width: 37.500px;
  height: 21px;
  flex: none;
  display: flex;
  align-items: center;
  justify-content: center;
}

.view.active {
  background: #c6c6c6;
}

.view .ic {
  stroke: #666;
}

.zoom-sign {
  width: 12px;
  flex: none;
  font-size: 15px;
  font-weight: 700;
  text-align: center;
  margin-left: 1px;
}

.slider {
  width: 97px;
  height: 1px;
  flex: none;
  background: #999;
  position: relative;
  margin: 0 2px;
}

.knob {
  position: absolute;
  left: 36px;
  top: -5px;
  width: 4px;
  height: 11px;
  background: #666;
}

.tick {
  position: absolute;
  left: 48px;
  top: -2px;
  width: 1px;
  height: 5px;
  background: #999;
}

.pct {
  margin-left: 13px;
}
</style>

<style>
html,
body {
  margin: 0;
  background: #e6e6e6;
}
</style>
